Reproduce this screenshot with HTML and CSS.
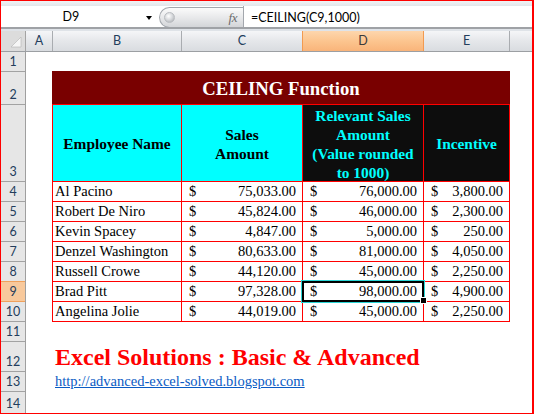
FILE: index.html
```html
<!DOCTYPE html>
<html>
<head>
<meta charset="utf-8">
<title>CEILING Function</title>
<link rel="stylesheet" href="styles.css">
</head>
<body>
<div class="window">
  <div class="topband"></div>
  <div class="fbar">
    <div class="namebox"><span class="nb-text">D9</span><span class="nb-arrow"></span></div>
    <div class="pill"><span class="knob"></span><span class="fx">fx</span></div>
    <div class="formula">=CEILING(C9,1000)</div>
  </div>
  <div class="fbar-line"></div>
  <div class="band2"></div>
  <div class="colheads">
    <div class="corner"><svg width="24" height="20" viewBox="0 0 24 20"><polygon points="20,6 20,16 10,16" fill="#f6f6f6" stroke="#b4b4b4" stroke-width="0.6"/></svg></div>
    <div class="ch col-a">A</div>
    <div class="ch col-b">B</div>
    <div class="ch col-c">C</div>
    <div class="ch col-d sel">D</div>
    <div class="ch col-e">E</div>
    <div class="ch col-f"></div>
  </div>
  <div class="sheet">
    <div class="rowheads">
      <div class="rh r20">1</div>
      <div class="rh r33">2</div>
      <div class="rh r77">3</div>
      <div class="rh r20">4</div>
      <div class="rh r20">5</div>
      <div class="rh r20">6</div>
      <div class="rh r20">7</div>
      <div class="rh r20">8</div>
      <div class="rh r20 sel">9</div>
      <div class="rh r20">10</div>
      <div class="rh r20">11</div>
      <div class="rh r30">12</div>
      <div class="rh r20">13</div>
      <div class="rh rlast">14</div>
    </div>
    <div class="cells">
      <div class="report">
        <div class="title">CEILING Function</div>
        <div class="grid">
          <div class="hd cyan">Employee Name</div>
          <div class="hd cyan">Sales<br>Amount</div>
          <div class="hd dark">Relevant Sales<br>Amount<br>(Value rounded<br>to 1000)</div>
          <div class="hd dark">Incentive</div>

          <div class="nm">Al Pacino</div>
          <div class="mn"><span>$</span><span>75,033.00</span></div>
          <div class="mn"><span>$</span><span>76,000.00</span></div>
          <div class="mn"><span>$</span><span>3,800.00</span></div>

          <div class="nm">Robert De Niro</div>
          <div class="mn"><span>$</span><span>45,824.00</span></div>
          <div class="mn"><span>$</span><span>46,000.00</span></div>
          <div class="mn"><span>$</span><span>2,300.00</span></div>

          <div class="nm">Kevin Spacey</div>
          <div class="mn"><span>$</span><span>4,847.00</span></div>
          <div class="mn"><span>$</span><span>5,000.00</span></div>
          <div class="mn"><span>$</span><span>250.00</span></div>

          <div class="nm">Denzel Washington</div>
          <div class="mn"><span>$</span><span>80,633.00</span></div>
          <div class="mn"><span>$</span><span>81,000.00</span></div>
          <div class="mn"><span>$</span><span>4,050.00</span></div>

          <div class="nm">Russell Crowe</div>
          <div class="mn"><span>$</span><span>44,120.00</span></div>
          <div class="mn"><span>$</span><span>45,000.00</span></div>
          <div class="mn"><span>$</span><span>2,250.00</span></div>

          <div class="nm">Brad Pitt</div>
          <div class="mn"><span>$</span><span>97,328.00</span></div>
          <div class="mn"><span>$</span><span>98,000.00</span></div>
          <div class="mn"><span>$</span><span>4,900.00</span></div>

          <div class="nm">Angelina Jolie</div>
          <div class="mn"><span>$</span><span>44,019.00</span></div>
          <div class="mn"><span>$</span><span>45,000.00</span></div>
          <div class="mn"><span>$</span><span>2,250.00</span></div>
        </div>
        <div class="selbox"></div>
        <div class="handle"></div>
      </div>
      <div class="brand">Excel Solutions : Basic &amp; Advanced</div>
      <div class="linkrow"><a class="link" href="#">http://advanced-excel-solved.blogspot.com</a></div>
    </div>
  </div>
</div>
</body>
</html>
```

FILE: styles.css
```css
* {
  box-sizing: border-box;
  margin: 0;
  padding: 0;
}

html, body {
  width: 534px;
  height: 414px;
  overflow: hidden;
  background: #ffffff;
}

.window {
  width: 534px;
  height: 414px;
  border-style: solid;
  border-color: #ff0000;
  border-width: 1px 2px 1px 1px;
  display: flex;
  flex-direction: column;
  font-family: Lato, "Liberation Sans", sans-serif;
  overflow: hidden;
}

/* ---------- formula bar ---------- */
.topband {
  height: 5px;
  background: linear-gradient(#f1f3f5, #e2e6ea);
}

.fbar {
  height: 21px;
  display: flex;
  background: #ffffff;
}

.namebox {
  width: 157px;
  display: flex;
  align-items: center;
  font-size: 12.5px;
  line-height: 20px;
  color: #000;
}

.nb-text {
  width: 140px;
  text-align: center;
  padding-top: 1px;
}

.nb-arrow {
  margin-left: 5px;
  width: 0;
  height: 0;
  border-left: 3.5px solid transparent;
  border-right: 3.5px solid transparent;
  border-top: 4px solid #000;
  margin-top: 2px;
}

.pill {
  margin-left: 1px;
  margin-top: 1px;
  width: 84px;
  height: 21px;
  border: 1px solid #a3a7ad;
  border-right: none;
  border-radius: 11px 0 0 11px;
  background: linear-gradient(#fbfbfb, #e6e7e9 55%, #d3d5d8);
  display: flex;
  align-items: center;
  justify-content: space-between;
  padding: 0 6px 0 4px;
}

.knob {
  width: 11px;
  height: 11px;
  border-radius: 50%;
  background: radial-gradient(circle at 40% 35%, #ffffff, #d9dbde 45%, #a3a6aa);
  border: 1px solid #b9bcc0;
}

.fx {
  font-family: "Liberation Serif", serif;
  font-style: italic;
  font-size: 13px;
  color: #6b6b6b;
  letter-spacing: -0.5px;
}

.formula {
  flex: 1;
  border-left: 1px solid #a3a7ad;
  font-size: 12.5px;
  line-height: 21px;
  padding-left: 7px;
  padding-top: 1px;
  color: #000;
}

.fbar-line {
  height: 2px;
  background: #9fa2a6;
}

.band2 {
  height: 2px;
  background: #dfe3e8;
}

/* ---------- column headers ---------- */
.colheads {
  height: 21px;
  display: flex;
  border-bottom: 1px solid #9c9fa3;
}

.corner {
  width: 25px;
  background: #dcdcdc;
  border-right: 1px solid #a3a3a3;
}

.corner svg {
  display: block;
}

.ch {
  background: linear-gradient(#f5f6f8, #e5e7ea 50%, #d9dce0);
  border-right: 1px solid #a9acb0;
  text-align: center;
  font-size: 12.5px;
  line-height: 20px;
  color: #233d5c;
}

.ch.sel {
  background: linear-gradient(#fdd6ad, #fcc58f 50%, #f9b47a);
  border-left: 1px solid #f29a50;
  border-right: 1px solid #f29a50;
  color: #3a3a3a;
}

.col-a { width: 27px; }
.col-b { width: 129px; }
.col-c { width: 121px; }
.col-d { width: 121px; margin-left: -1px; width: 122px; }
.col-e { width: 86px; }
.col-f { flex: 1; border-right: none; }

/* ---------- sheet ---------- */
.sheet {
  flex: 1;
  display: flex;
  min-height: 0;
}

.rowheads {
  width: 25px;
  border-right: 1px solid #9f9f9f;
  background: #e6e6e6;
  display: flex;
  flex-direction: column;
}

.rh {
  border-bottom: 1px solid #a2a2a2;
  display: flex;
  align-items: flex-end;
  justify-content: center;
  font-size: 12.5px;
  line-height: 19px;
  color: #233d5c;
}

.rh.sel {
  background: #f8c99c;
  border-top: 1px solid #f0a15c;
  border-bottom-color: #f0a15c;
  margin-top: -1px;
  height: 21px;
}

.r20 { height: 20px; }
.r30 { height: 30px; }
.r33 { height: 33px; }
.r77 { height: 77px; }
.rlast { flex: 1; border-bottom: none; }

.cells {
  flex: 1;
  background: #ffffff;
  font-family: "Liberation Serif", "Times New Roman", serif;
  color: #000;
}

/* ---------- report table ---------- */
.report {
  position: relative;
  margin: 19px 0 0 26px;
  width: 458px;
}

.title {
  height: 33px;
  background: #790000;
  color: #ffffff;
  font-weight: bold;
  font-size: 18.7px;
  line-height: 21px;
  text-align: center;
  padding-top: 7px;
}

.grid {
  display: grid;
  grid-template-columns: 128px 120px 120px 85px;
  grid-template-rows: 76px repeat(7, 19px);
  gap: 1px;
  padding: 1px;
  background: #ff0000;
}

.hd {
  display: flex;
  align-items: center;
  justify-content: center;
  text-align: center;
  font-weight: bold;
  font-size: 15.4px;
  line-height: 19px;
  padding-top: 1px;
  white-space: nowrap;
}

.hd.cyan {
  background: #00ffff;
  color: #000000;
}

.hd.dark {
  background: #0d0d0d;
  color: #00ffff;
}

.nm,
.mn {
  background: #ffffff;
  font-size: 14.5px;
  line-height: 19px;
  white-space: nowrap;
}

.nm {
  padding-left: 2px;
}

.mn {
  display: flex;
  justify-content: space-between;
  padding: 0 6px 0 7px;
}

.selbox {
  position: absolute;
  left: 250px;
  top: 210px;
  width: 122px;
  height: 21px;
  border: 2px solid #000000;
  outline: 1px solid #2ad6d6;
}

.handle {
  position: absolute;
  left: 369px;
  top: 227px;
  width: 5px;
  height: 5px;
  background: #000000;
  box-shadow: 0 0 0 1px #ffffff;
}

/* ---------- footer text ---------- */
.brand {
  margin: 20px 0 0 29px;
  height: 30px;
  line-height: 30px;
  font-size: 24px;
  font-weight: bold;
  color: #ff0000;
  white-space: nowrap;
}

.linkrow {
  margin-left: 29px;
  height: 20px;
  line-height: 19px;
  font-size: 14.5px;
  white-space: nowrap;
}

.link {
  color: #0a5bc4;
  text-decoration: underline;
}
```
